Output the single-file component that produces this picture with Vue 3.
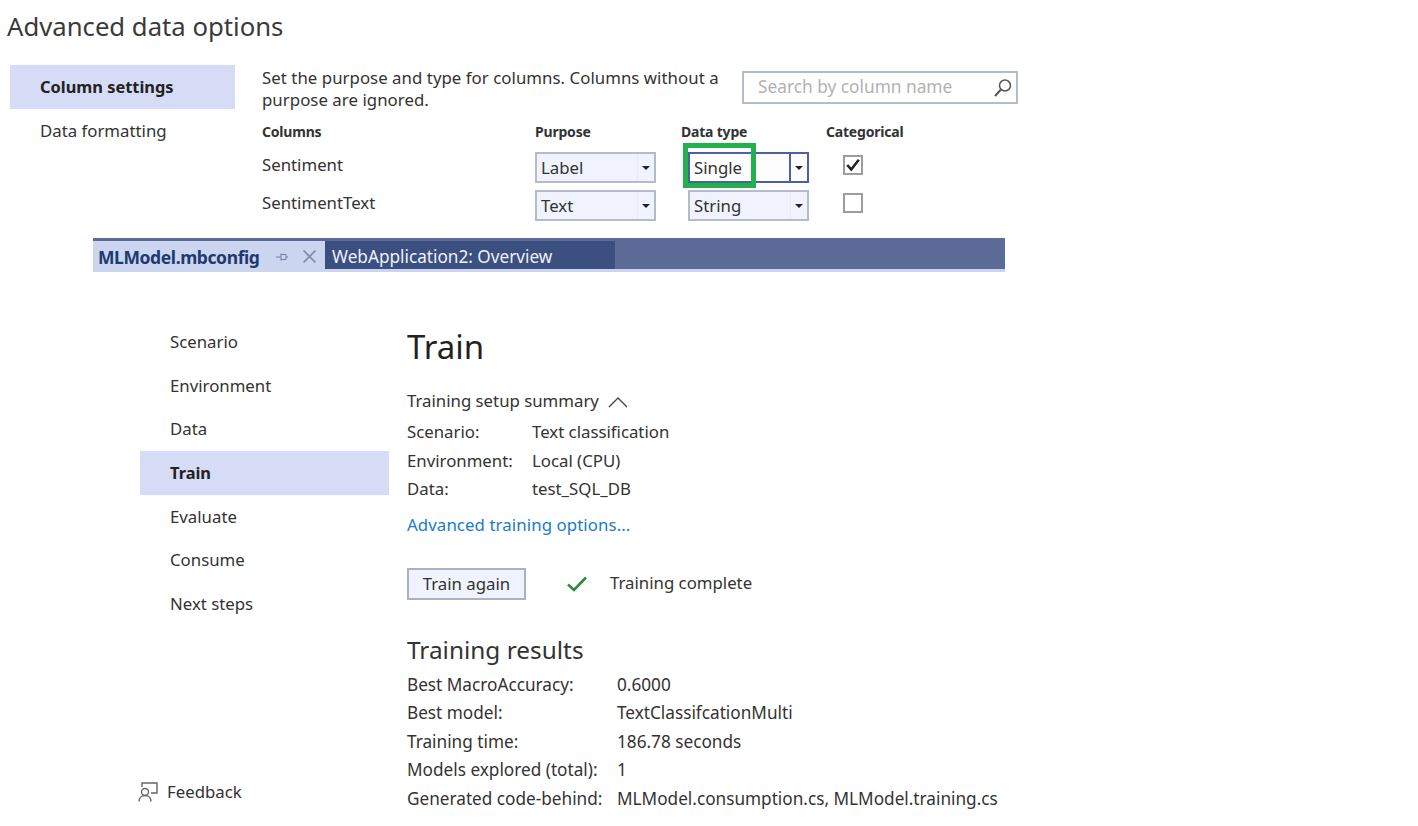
<script setup>
const cols = [
  { name: 'Sentiment', purpose: 'Label', type: 'Single', checked: true, focus: true },
  { name: 'SentimentText', purpose: 'Text', type: 'String', checked: false, focus: false }
]
const steps = ['Scenario', 'Environment', 'Data', 'Train', 'Evaluate', 'Consume', 'Next steps']
const summary = [['Scenario:', 'Text classification'], ['Environment:', 'Local (CPU)'], ['Data:', 'test_SQL_DB']]
const results = [
  ['Best MacroAccuracy:', '0.6000'],
  ['Best model:', 'TextClassifcationMulti'],
  ['Training time:', '186.78 seconds'],
  ['Models explored (total):', '1'],
  ['Generated code-behind:', 'MLModel.consumption.cs, MLModel.training.cs']
]
</script>

<template>
  <div class="page">
    <h1 class="adv-title">Advanced data options</h1>
    <section class="adv">
      <nav class="adv-nav">
        <div class="adv-item active">Column settings</div>
        <div class="adv-item">Data formatting</div>
      </nav>
      <div class="adv-main">
        <div class="adv-top">
          <p class="desc">Set the purpose and type for columns. Columns without a purpose are ignored.</p>
          <div class="search">
            <span>Search by column name</span>
            <svg width="22" height="22" viewBox="0 0 22 22" fill="none" stroke="#555" stroke-width="1.5">
              <circle cx="13" cy="8.5" r="5.5" />
              <path d="M9 12.500 3 19" stroke-width="2" />
            </svg>
          </div>
        </div>
        <div class="grid head">
          <span>Columns</span><span>Purpose</span><span class="dt">Data type</span><span class="cat">Categorical</span>
        </div>
        <div v-for="c in cols" :key="c.name" class="grid row">
          <span class="col-name">{{ c.name }}</span>
          <div class="select"><span>{{ c.purpose }}</span><i class="sep"></i><b class="arrow"></b></div>
          <div class="select type" :class="{ focus: c.focus }">
            <span>{{ c.type }}</span><i class="sep"></i><b class="arrow"></b>
            <div v-if="c.focus" class="highlight"></div>
          </div>
          <div class="check" :class="{ on: c.checked }">
            <svg v-if="c.checked" width="18" height="18" viewBox="0 0 18 18" fill="none" stroke="#222" stroke-width="2.8">
              <path d="M2.500 9 7 14 15.500 3" />
            </svg>
          </div>
        </div>
      </div>
    </section>

    <div class="tabbar">
      <div class="tab-active">
        <span class="tab-name">MLModel.mbconfig</span>
        <svg class="pin" width="14" height="12" viewBox="0 0 14 12" fill="none" stroke="#6f7fa5" stroke-width="1">
          <path d="M1 6h5M6 2.500v7M6 3.500h5v5H6M11 6h2" />
        </svg>
        <svg width="15" height="15" viewBox="0 0 15 15" fill="none" stroke="#7d8aa8" stroke-width="1.7">
          <path d="M1.500 1.500l12 12M13.500 1.500l-12 12" />
        </svg>
      </div>
      <div class="tab-other">WebApplication2: Overview</div>
    </div>

    <section class="wizard">
      <nav class="steps">
        <div class="step-list">
          <div v-for="s in steps" :key="s" class="step" :class="{ active: s === 'Train' }">{{ s }}</div>
        </div>
        <div class="feedback">
          <svg width="22" height="22" viewBox="0 0 22 22" fill="none" stroke="#666" stroke-width="1.4">
            <path d="M5 6V2h15v10h-6" />
            <circle cx="8" cy="11" r="3.500" />
            <path d="M2 20.500c0-3.500 2.500-6 6-6s6 2.500 6 6" />
          </svg>
          <span>Feedback</span>
        </div>
      </nav>
      <main class="train">
        <h2 class="train-title">Train</h2>
        <div class="summary-head">
          <span>Training setup summary</span>
          <svg width="22" height="12" viewBox="0 0 22 12" fill="none" stroke="#444" stroke-width="1.4">
            <path d="M2 11 11 2l9 9" />
          </svg>
        </div>
        <div v-for="r in summary" :key="r[0]" class="sum-row">
          <span class="sum-k">{{ r[0] }}</span><span>{{ r[1] }}</span>
        </div>
        <a class="link">Advanced training options...</a>
        <div class="action">
          <button class="btn">Train again</button>
          <svg class="tick" width="22" height="18" viewBox="0 0 22 18" fill="none" stroke="#2e8b3e" stroke-width="2.600">
            <path d="M2 9.500 8 15 20 2.500" />
          </svg>
          <span class="done">Training complete</span>
        </div>
        <h3 class="res-title">Training results</h3>
        <div v-for="r in results" :key="r[0]" class="res-row">
          <span class="res-k">{{ r[0] }}</span><span>{{ r[1] }}</span>
        </div>
      </main>
    </section>
  </div>
</template>

<style>
html, body { background: #fff; }
</style>

<style scoped>
.page {
  width: 1418px;
  height: 826px;
  overflow: hidden;
  box-sizing: border-box;
  font-family: "Noto Sans", "Open Sans", sans-serif;
  font-size: 16.8px;
  color: #333;
  background: #fff;
}
.adv-title {
  margin: 0;
  padding: 9px 0 0 7px;
  height: 56px;
  box-sizing: border-box;
  font-size: 25.700px;
  line-height: 36px;
  font-weight: 400;
  color: #3a3a3a;
}
.adv { display: flex; padding-left: 10px; margin-top: 9px; height: 173px; }
.adv-nav { width: 225px; margin-right: 27px; flex: none; }
.adv-item { height: 44px; line-height: 44px; padding-left: 30px; color: #333; }
.adv-item.active { background: #d6dcf5; font-weight: 700; color: #222; font-size: 16.4px; }
.adv-main { width: 756px; }
.adv-top { display: flex; justify-content: space-between; height: 56px; }
.desc { margin: 2px 0 0; width: 475px; line-height: 22px; color: #333; letter-spacing: 0.05px; }
.search {
  width: 276px;
  height: 33px;
  margin-top: 6px;
  box-sizing: border-box;
  border: 2px solid #b4bccb;
  display: flex;
  align-items: center;
  justify-content: space-between;
  padding: 0 2px 0 14px;
  color: #b2b2b2;
  font-size: 17.300px;
  line-height: 26px;
}
.search span { margin-top: -2px; }
.grid { display: grid; grid-template-columns: 273px 153px 138px auto; }
.head { height: 21px; align-items: center; font-size: 14px; font-weight: 700; color: #333; letter-spacing: -0.2px; }
.dt { margin-left: -7px; }
.cat { margin-left: 0; }
.row { height: 38px; align-items: start; }
.col-name { line-height: 24px; padding-top: 1px; }
.head + .row { margin-top: 10px; }
.select {
  position: relative;
  width: 121px;
  height: 31px;
  box-sizing: border-box;
  border: 2px solid #b4bccb;
  background: #f0f3fd;
  display: flex;
  align-items: center;
  padding-left: 4px;
}
.select > span { flex: 1; }
.sep { width: 1px; align-self: stretch; background: #e8ebf6; margin-right: 4px; }
.arrow {
  width: 0;
  height: 0;
  border-left: 4px solid transparent;
  border-right: 4px solid transparent;
  border-top: 4px solid #222;
  margin-right: 4px;
}
.select.focus { border-color: #4a639f; background: #fdfdfd; }
.select.focus .sep { background: #4a639f; width: 2px; }
.highlight {
  position: absolute;
  left: -7px;
  top: -11px;
  width: 73px;
  height: 45px;
  box-sizing: border-box;
  border: 5px solid #22b14c;
}
.check {
  width: 20px;
  height: 20px;
  margin: 3px 0 0 17px;
  box-sizing: border-box;
  border: 2px solid #9d9d9d;
  background: #fff;
  display: flex;
  align-items: center;
  justify-content: center;
}
.tabbar {
  margin-left: 93px;
  width: 912px;
  height: 34px;
  box-sizing: border-box;
  background: #5d6b99;
  padding-top: 3px;
  display: flex;
  border-bottom: 3px solid #ccd5f0;
}
.tab-active {
  width: 232px;
  margin-bottom: -3px;
  box-sizing: border-box;
  background: #ccd5f0;
  display: flex;
  align-items: center;
  padding-left: 5px;
}
.tab-name { font-weight: 700; font-size: 17.500px; color: #1e3a6e; letter-spacing: -0.4px; width: 177px; flex: none; white-space: nowrap; }
.pin { margin-right: 13px; flex: none; }
.tab-other {
  width: 290px;
  box-sizing: border-box;
  background: #3b4f81;
  color: #eef1fa;
  padding: 1px 0 0 7px;
  line-height: 29px;
  font-size: 17.200px;
  white-space: nowrap;
}
.wizard { display: flex; margin-top: 48px; padding-left: 140px; }
.steps { width: 249px; height: 506px; margin-right: 18px; flex: none; display: flex; flex-direction: column; justify-content: space-between; }
.step { height: 43.670px; line-height: 44px; padding-left: 30px; }
.step.active { background: #d6dcf5; font-weight: 700; color: #222; font-size: 16.400px; }
.feedback { display: flex; align-items: center; gap: 8px; margin-bottom: 23px; margin-left: -3px; }
.train { flex: 1; }
.train-title { margin: 0; height: 55px; font-size: 33px; line-height: 54px; font-weight: 400; color: #222; }
.summary-head { display: flex; align-items: center; gap: 8px; margin-top: 12px; height: 31px; }
.summary-head span { margin-top: -4px; }
.summary-head svg { margin-top: -1px; }
.sum-row { display: flex; height: 28.500px; line-height: 28px; white-space: nowrap; }
.sum-k { width: 125px; }
.link { display: block; margin-top: 7px; line-height: 28px; color: #1a7bc9; letter-spacing: 0.1px; }
.action { display: flex; align-items: center; margin-top: 29px; height: 32px; }
.btn {
  width: 119px;
  height: 32px;
  margin-right: 40px;
  font: inherit;
  color: #333;
  background: #f0f3fd;
  border: 2px solid #a9b2c4;
}
.tick { margin-right: 22px; }
.done { margin-top: -3px; }
.res-title { margin: 31px 0 0; height: 40px; line-height: 38px; font-size: 24.400px; font-weight: 400; color: #333; }
.res-row { display: flex; height: 28.500px; line-height: 28px; white-space: nowrap; font-size: 17.200px; }
.res-k { width: 210px; }
</style>
